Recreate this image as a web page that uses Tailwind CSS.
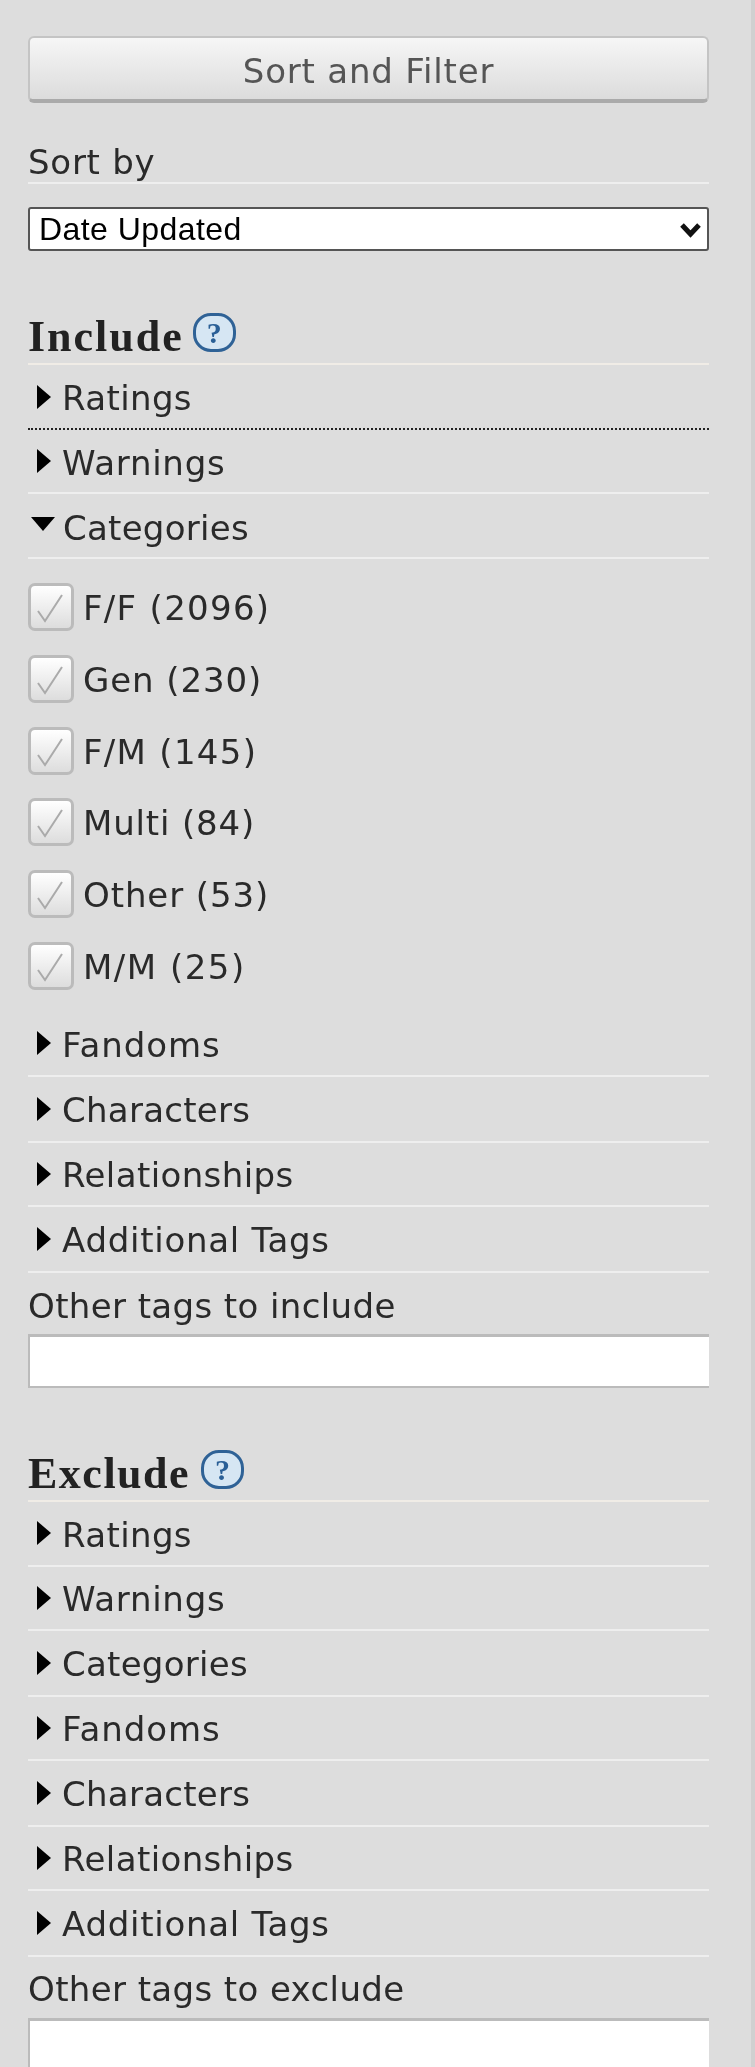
<!DOCTYPE html>
<html lang="en">
<head>
    <meta charset="UTF-8">
    <meta name="viewport" content="width=device-width, initial-scale=1.0">
    <title>Sort and Filter</title>
    <script src="https://cdn.jsdelivr.net/npm/@tailwindcss/browser@4"></script>
</head>
<body class="bg-[#ddd]">
<div class="w-[755px] h-[2067px] overflow-hidden bg-[#ddd] border-r-[4px] border-[#d0d0d0] font-['DejaVu_Sans',sans-serif] text-[34px] text-[#2a2a2a] blur-[0.6px]">
  <form class="w-[709px] pl-[28px] pt-[36px]">
    <button type="button" class="block w-full h-[67px] pt-[6px] rounded-[6px] border-2 border-[#c4c4c4] border-b-[4px] border-b-[#aaa] bg-gradient-to-b from-[#f6f6f6] to-[#dcdcdc] text-[#555] text-center tracking-[0.8px]">Sort and Filter</button>

    <div class="h-[81px] flex items-end border-b-2 border-[#eee] leading-[40px] tracking-[0.75px]">Sort by</div>
    <div class="relative mt-[23px]">
      <select class="block appearance-none w-full h-[44px] pl-[9px] py-0 leading-[36px] bg-white border-2 border-[#555] rounded-[3px] text-black text-[32px] tracking-[0.44px] font-['Liberation_Sans',sans-serif]">
        <option>Date Updated</option>
      </select>
      <svg class="absolute right-[8px] top-[15px]" width="21" height="17" viewBox="0 0 21 17" fill="none" stroke="#111" stroke-width="5"><path d="M2 3l8.5 9L19 3"/></svg>
    </div>

    <!-- include -->
    <div class="h-[114px] flex items-end gap-[9px] border-b-2 border-[#f0ece6] pb-[4px]">
      <h3 class="font-['Liberation_Serif',serif] font-bold text-[44px] leading-[44px] tracking-[2px] text-[#222]">Include</h3>
      <span class="flex items-center justify-center w-[43px] h-[39px] mb-[7px] rounded-[18px] border-[3px] border-[#2f6296] bg-[#d6e6f3] text-[#2a5f96] text-[30px] font-bold font-['Liberation_Serif',serif]">?</span>
    </div>
    <div class="h-[65px] pt-[4px] flex items-center gap-[11px] border-b-2 border-dotted border-[#222] tracking-[0.37px]"><i class="ml-[9px] mb-[4px] border-y-[12px] border-l-[14px] border-y-transparent border-l-black"></i>Ratings</div>
    <div class="h-[64px] pt-[4px] flex items-center gap-[11px] border-b-2 border-[#eee] tracking-[0.74px]"><i class="ml-[9px] mb-[4px] border-y-[12px] border-l-[14px] border-y-transparent border-l-black"></i>Warnings</div>
    <div class="h-[65px] pt-[5px] flex items-center gap-[8px] border-b-2 border-[#eee] tracking-[0.26px]"><i class="ml-[3px] mb-[8px] border-x-[12px] border-t-[14px] border-x-transparent border-t-black"></i>Categories</div>

    <ul class="pt-[24px] pb-[22px] flex flex-col gap-[23.8px]">
      <li class="flex items-center gap-[9px] h-[48px] tracking-[1.3px]">
        <span class="w-[46px] h-[48px] rounded-[7px] border-[3px] border-[#bbb] bg-gradient-to-b from-white to-[#ddd]"><svg class="w-full h-full" viewBox="0 0 40 42" fill="none" stroke="#aaa" stroke-width="2"><path d="M7 25l7 10L31 9"/></svg></span><span class="pt-[3px]">F/F (2096)</span>
      </li>
      <li class="flex items-center gap-[9px] h-[48px] tracking-[0.9px]">
        <span class="w-[46px] h-[48px] rounded-[7px] border-[3px] border-[#bbb] bg-gradient-to-b from-white to-[#ddd]"><svg class="w-full h-full" viewBox="0 0 40 42" fill="none" stroke="#aaa" stroke-width="2"><path d="M7 25l7 10L31 9"/></svg></span><span class="pt-[3px]">Gen (230)</span>
      </li>
      <li class="flex items-center gap-[9px] h-[48px] tracking-[1.3px]">
        <span class="w-[46px] h-[48px] rounded-[7px] border-[3px] border-[#bbb] bg-gradient-to-b from-white to-[#ddd]"><svg class="w-full h-full" viewBox="0 0 40 42" fill="none" stroke="#aaa" stroke-width="2"><path d="M7 25l7 10L31 9"/></svg></span><span class="pt-[3px]">F/M (145)</span>
      </li>
      <li class="flex items-center gap-[9px] h-[48px] tracking-[0.84px]">
        <span class="w-[46px] h-[48px] rounded-[7px] border-[3px] border-[#bbb] bg-gradient-to-b from-white to-[#ddd]"><svg class="w-full h-full" viewBox="0 0 40 42" fill="none" stroke="#aaa" stroke-width="2"><path d="M7 25l7 10L31 9"/></svg></span><span class="pt-[3px]">Multi (84)</span>
      </li>
      <li class="flex items-center gap-[9px] h-[48px] tracking-[0.9px]">
        <span class="w-[46px] h-[48px] rounded-[7px] border-[3px] border-[#bbb] bg-gradient-to-b from-white to-[#ddd]"><svg class="w-full h-full" viewBox="0 0 40 42" fill="none" stroke="#aaa" stroke-width="2"><path d="M7 25l7 10L31 9"/></svg></span><span class="pt-[3px]">Other (53)</span>
      </li>
      <li class="flex items-center gap-[9px] h-[48px] tracking-[1.5px]">
        <span class="w-[46px] h-[48px] rounded-[7px] border-[3px] border-[#bbb] bg-gradient-to-b from-white to-[#ddd]"><svg class="w-full h-full" viewBox="0 0 40 42" fill="none" stroke="#aaa" stroke-width="2"><path d="M7 25l7 10L31 9"/></svg></span><span class="pt-[3px]">M/M (25)</span>
      </li>
    </ul>

    <div class="h-[65px] pt-[4px] flex items-center gap-[11px] border-b-2 border-[#eee] tracking-[0.94px]"><i class="ml-[9px] mb-[4px] border-y-[12px] border-l-[14px] border-y-transparent border-l-black"></i>Fandoms</div>
    <div class="h-[66px] pt-[4px] flex items-center gap-[11px] border-b-2 border-[#eee] tracking-[0.26px]"><i class="ml-[9px] mb-[4px] border-y-[12px] border-l-[14px] border-y-transparent border-l-black"></i>Characters</div>
    <div class="h-[64px] pt-[4px] flex items-center gap-[11px] border-b-2 border-[#eee] tracking-[0.4px]"><i class="ml-[9px] mb-[4px] border-y-[12px] border-l-[14px] border-y-transparent border-l-black"></i>Relationships</div>
    <div class="h-[66px] pt-[4px] flex items-center gap-[11px] border-b-2 border-[#eee] tracking-[0.73px]"><i class="ml-[9px] mb-[4px] border-y-[12px] border-l-[14px] border-y-transparent border-l-black"></i>Additional Tags</div>
    <label class="block h-[61px] pt-[10px] leading-[46px] tracking-[0.38px]">Other tags to include</label>
    <input type="text" class="block w-full h-[54px] bg-white border-2 border-[#bbb] border-t-[3px] border-r-0">

    <!-- exclude -->
    <div class="h-[114px] flex items-end gap-[11px] border-b-2 border-[#f0ece6] pb-[4px]">
      <h3 class="font-['Liberation_Serif',serif] font-bold text-[44px] leading-[44px] tracking-[1.5px] text-[#222]">Exclude</h3>
      <span class="flex items-center justify-center w-[43px] h-[39px] mb-[7px] rounded-[18px] border-[3px] border-[#2f6296] bg-[#d6e6f3] text-[#2a5f96] text-[30px] font-bold font-['Liberation_Serif',serif]">?</span>
    </div>
    <div class="h-[65px] pt-[4px] flex items-center gap-[11px] border-b-2 border-[#eee] tracking-[0.37px]"><i class="ml-[9px] mb-[4px] border-y-[12px] border-l-[14px] border-y-transparent border-l-black"></i>Ratings</div>
    <div class="h-[64px] pt-[4px] flex items-center gap-[11px] border-b-2 border-[#eee] tracking-[0.74px]"><i class="ml-[9px] mb-[4px] border-y-[12px] border-l-[14px] border-y-transparent border-l-black"></i>Warnings</div>
    <div class="h-[66px] pt-[4px] flex items-center gap-[11px] border-b-2 border-[#eee] tracking-[0.26px]"><i class="ml-[9px] mb-[4px] border-y-[12px] border-l-[14px] border-y-transparent border-l-black"></i>Categories</div>
    <div class="h-[64px] pt-[4px] flex items-center gap-[11px] border-b-2 border-[#eee] tracking-[0.94px]"><i class="ml-[9px] mb-[4px] border-y-[12px] border-l-[14px] border-y-transparent border-l-black"></i>Fandoms</div>
    <div class="h-[66px] pt-[4px] flex items-center gap-[11px] border-b-2 border-[#eee] tracking-[0.26px]"><i class="ml-[9px] mb-[4px] border-y-[12px] border-l-[14px] border-y-transparent border-l-black"></i>Characters</div>
    <div class="h-[64px] pt-[4px] flex items-center gap-[11px] border-b-2 border-[#eee] tracking-[0.4px]"><i class="ml-[9px] mb-[4px] border-y-[12px] border-l-[14px] border-y-transparent border-l-black"></i>Relationships</div>
    <div class="h-[66px] pt-[4px] flex items-center gap-[11px] border-b-2 border-[#eee] tracking-[0.73px]"><i class="ml-[9px] mb-[4px] border-y-[12px] border-l-[14px] border-y-transparent border-l-black"></i>Additional Tags</div>
    <label class="block h-[61px] pt-[9px] leading-[46px] tracking-[0.38px]">Other tags to exclude</label>
    <input type="text" class="block w-full h-[54px] bg-white border-2 border-[#bbb] border-t-[3px] border-r-0">
  </form>
</div>
</body>
</html>
